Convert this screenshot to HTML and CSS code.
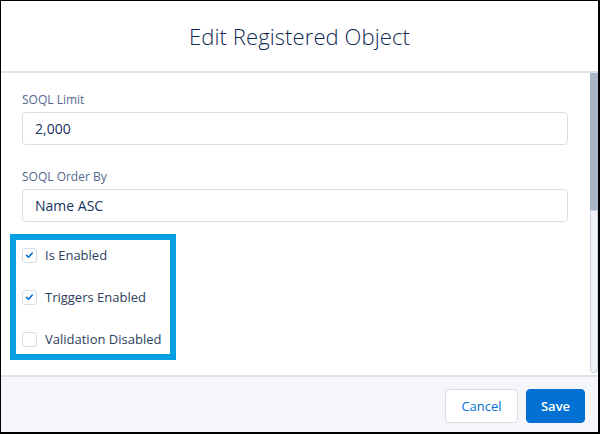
FILE: index.html
```html
<!DOCTYPE html>
<html>
<head>
<meta charset="utf-8">
<link rel="stylesheet" href="styles.css">
</head>
<body>
<div class="frame">
  <header class="modal-header">
    <h2 class="title">Edit Registered Object</h2>
  </header>
  <div class="modal-body-row">
    <div class="modal-body">
      <div class="field">
        <label class="field-label">SOQL Limit</label>
        <input class="field-input" type="text" value="2,000" readonly>
      </div>
      <div class="field">
        <label class="field-label">SOQL Order By</label>
        <input class="field-input" type="text" value="Name ASC" readonly>
      </div>
      <div class="highlight">
        <div class="check-row">
          <span class="checkbox"><svg viewBox="0 0 14 14" width="14" height="14"><path d="M3.8 7.4 L6 9.4 L10 4.9" fill="none" stroke="#0070d2" stroke-width="1.7" stroke-linecap="round" stroke-linejoin="round"/></svg></span>
          <span class="check-label">Is Enabled</span>
        </div>
        <div class="check-row">
          <span class="checkbox"><svg viewBox="0 0 14 14" width="14" height="14"><path d="M3.8 7.4 L6 9.4 L10 4.9" fill="none" stroke="#0070d2" stroke-width="1.7" stroke-linecap="round" stroke-linejoin="round"/></svg></span>
          <span class="check-label">Triggers Enabled</span>
        </div>
        <div class="check-row">
          <span class="checkbox"></span>
          <span class="check-label">Validation Disabled</span>
        </div>
      </div>
    </div>
    <div class="scrollbar">
      <div class="thumb"></div>
      <div class="track"></div>
    </div>
  </div>
  <footer class="modal-footer">
    <button class="btn btn-neutral">Cancel</button>
    <button class="btn btn-brand">Save</button>
  </footer>
</div>
</body>
</html>
```

FILE: styles.css
```css
* { box-sizing: border-box; }
html, body { margin: 0; padding: 0; background: #fff; }
body { font-family: "Open Sans", "Liberation Sans", sans-serif; color: #16325c; }

.frame {
  width: 600px;
  height: 434px;
  display: flex;
  flex-direction: column;
  border-left: 1px solid #000;
  border-top: 1px solid #000;
  border-right: 2px solid #000;
  border-bottom: 2px solid #000;
  background: #fff;
}

.modal-header {
  height: 72px;
  flex: none;
  display: flex;
  align-items: center;
  justify-content: center;
  border-bottom: 2px solid #dde2ea;
}
.title {
  margin: 0;
  font-weight: 300;
  font-size: 22px;
  color: #0f2a52;
  letter-spacing: 0.1px;
}

.modal-body-row {
  flex: 1;
  display: flex;
  min-height: 0;
}
.modal-body {
  flex: 1;
  padding: 18px 22px 0 21px;
}

.field { margin-bottom: 23px; }
.field + .field { margin-bottom: 12px; }
.field-label {
  display: block;
  font-size: 12px;
  line-height: 18px;
  color: #54698d;
  margin-bottom: 3px;
}
.field-input {
  display: block;
  width: 100%;
  height: 33px;
  border: 1px solid #d8dde6;
  border-radius: 4px;
  padding: 0 12px;
  font: inherit;
  font-size: 14px;
  color: #16325c;
  background: #fff;
  outline: none;
}

.highlight {
  width: 166px;
  margin-left: -12px;
  border: 6px solid #00a0e3;
  padding: 0 6px;
  display: flex;
  flex-direction: column;
  gap: 12px;
}
.check-row {
  height: 30px;
  display: flex;
  align-items: center;
  gap: 8px;
}
.checkbox {
  width: 15px;
  height: 15px;
  border: 1px solid #d8dde6;
  border-radius: 3px;
  background: #fff;
  display: flex;
  align-items: center;
  justify-content: center;
  flex: none;
}
.checkbox svg { display: block; }
.check-label {
  font-size: 13px;
  color: #2c3e5d;
  white-space: nowrap;
}

.scrollbar {
  width: 8px;
  flex: none;
  display: flex;
  flex-direction: column;
  background: #fff;
}
.thumb {
  height: 137px;
  background: #a8b6c6;
}
.track {
  flex: 1;
  margin-bottom: 2px;
  background: #eef1f6;
  border: 1px solid #c9d2dd;
  border-radius: 0 0 3px 3px;
}

.modal-footer {
  height: 57px;
  flex: none;
  border-top: 2px solid #dde2ea;
  background: #f4f6f9;
  display: flex;
  justify-content: flex-end;
  align-items: flex-start;
  gap: 8px;
  padding: 12px 13px 0 0;
}
.btn {
  height: 34px;
  padding: 0 15px;
  border-radius: 4px;
  font-family: "Open Sans", "Liberation Sans", sans-serif;
  font-size: 13px;
  line-height: 32px;
  cursor: pointer;
}
.btn-neutral {
  width: 73px;
  padding: 0;
  background: #fff;
  color: #0070d2;
  border: 1px solid #d8dde6;
}
.btn-brand {
  width: 59px;
  padding: 0;
  background: #0070d2;
  color: #fff;
  border: 1px solid #0070d2;
  font-weight: 600;
}
```
